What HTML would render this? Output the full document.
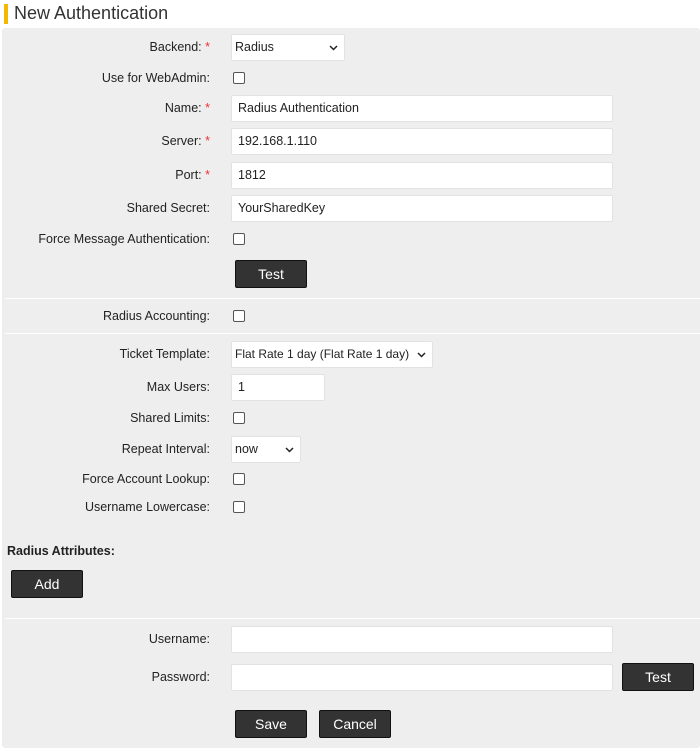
<!DOCTYPE html>
<html><head><style>
*{box-sizing:border-box;margin:0;padding:0}
body{width:700px;height:755px;background:#fff;font-family:"Liberation Sans",sans-serif;font-size:12.5px;color:#222;position:relative;overflow:hidden}
.a{position:absolute}
.bar{left:4px;top:4px;width:4px;height:20px;background:#f5b800}
.title{left:14px;top:3px;font-size:18px;color:#333}
.panel{left:2px;top:28px;width:698px;height:720px;background:#eee;border-radius:3px}
.lbl{right:490px;text-align:right;white-space:nowrap;transform:translateY(-50%)}
.req{color:#e33}
.in{background:#fff;border:1px solid #e2e2e2;border-radius:2px;height:27px;padding-left:6px;line-height:25px;font-size:12.5px}
.cb{width:12px;height:12px;border:1.5px solid #555;border-radius:2px;background:#fff;left:233px}
.btn{background:#333;color:#fff;border:1px solid #111;border-radius:2px;height:28px;width:72px;text-align:center;line-height:26px;font-size:14px}
.hr{left:5px;width:695px;height:1px;background:#fff}
.chev{position:absolute;right:6px;top:10px;width:9px;height:6px}
</style></head><body>
<div class="a bar"></div>
<div class="a title">New Authentication</div>
<div class="a panel"></div>

<div class="a lbl" style="top:47px">Backend: <span class="req">*</span></div>
<div class="a in" style="left:231px;top:34px;width:114px;padding-left:3px">Radius<svg class="chev" viewBox="0 0 9 6"><path d="M1 1L4.5 4.5L8 1" fill="none" stroke="#222" stroke-width="1.5"/></svg></div>
<div class="a lbl" style="top:78px">Use for WebAdmin:</div>
<div class="a cb" style="top:72px"></div>
<div class="a lbl" style="top:108px">Name: <span class="req">*</span></div>
<div class="a in" style="left:231px;top:95px;width:382px">Radius Authentication</div>
<div class="a lbl" style="top:141px">Server: <span class="req">*</span></div>
<div class="a in" style="left:231px;top:128px;width:382px">192.168.1.110</div>
<div class="a lbl" style="top:175px">Port: <span class="req">*</span></div>
<div class="a in" style="left:231px;top:162px;width:382px">1812</div>
<div class="a lbl" style="top:208px">Shared Secret:</div>
<div class="a in" style="left:231px;top:195px;width:382px">YourSharedKey</div>
<div class="a lbl" style="top:239px">Force Message Authentication:</div>
<div class="a cb" style="top:233px"></div>
<div class="a btn" style="left:235px;top:260px">Test</div>
<div class="a hr" style="top:298px"></div>
<div class="a lbl" style="top:316px">Radius Accounting:</div>
<div class="a cb" style="top:310px"></div>
<div class="a hr" style="top:333px"></div>
<div class="a lbl" style="top:354px">Ticket Template:</div>
<div class="a in" style="left:231px;top:341px;width:202px;padding-left:3px;font-size:12px">Flat Rate 1 day (Flat Rate 1 day)<svg class="chev" viewBox="0 0 9 6"><path d="M1 1L4.5 4.5L8 1" fill="none" stroke="#222" stroke-width="1.5"/></svg></div>
<div class="a lbl" style="top:387px">Max Users:</div>
<div class="a in" style="left:231px;top:374px;width:94px">1</div>
<div class="a lbl" style="top:418px">Shared Limits:</div>
<div class="a cb" style="top:412px"></div>
<div class="a lbl" style="top:449px">Repeat Interval:</div>
<div class="a in" style="left:231px;top:436px;width:70px;padding-left:3px">now<svg class="chev" viewBox="0 0 9 6"><path d="M1 1L4.5 4.5L8 1" fill="none" stroke="#222" stroke-width="1.5"/></svg></div>
<div class="a lbl" style="top:479px">Force Account Lookup:</div>
<div class="a cb" style="top:473px"></div>
<div class="a lbl" style="top:507px">Username Lowercase:</div>
<div class="a cb" style="top:501px"></div>
<div class="a" style="left:7px;top:544px;font-weight:bold">Radius Attributes:</div>
<div class="a btn" style="left:11px;top:570px">Add</div>
<div class="a hr" style="top:618px"></div>
<div class="a lbl" style="top:639px">Username:</div>
<div class="a in" style="left:231px;top:626px;width:382px"></div>
<div class="a lbl" style="top:677px">Password:</div>
<div class="a in" style="left:231px;top:664px;width:382px"></div>
<div class="a btn" style="left:622px;top:663px">Test</div>
<div class="a btn" style="left:235px;top:710px">Save</div>
<div class="a btn" style="left:319px;top:710px">Cancel</div>
</body></html>
